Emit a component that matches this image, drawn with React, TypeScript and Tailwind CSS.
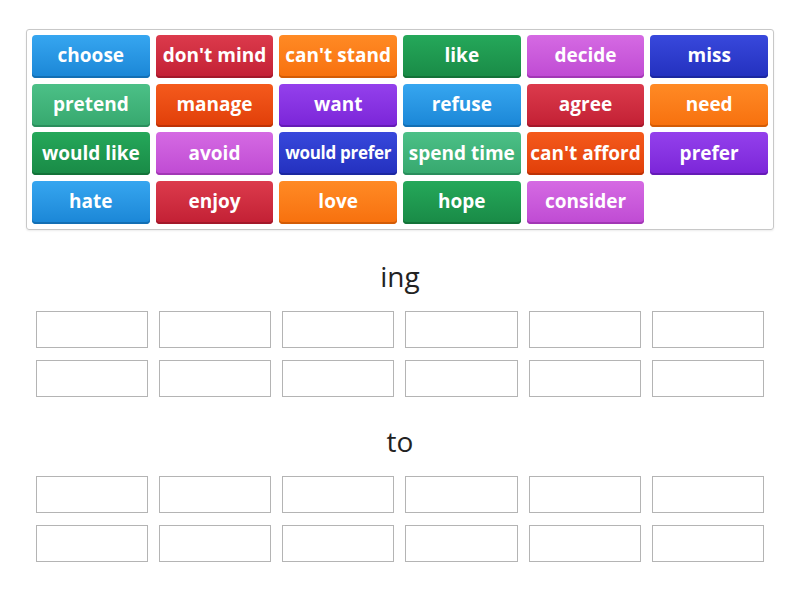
const tiles: { label: string; color: number; small?: boolean }[] = [
  { label: 'choose', color: 0 },
  { label: "don't mind", color: 1 },
  { label: "can't stand", color: 2 },
  { label: 'like', color: 3 },
  { label: 'decide', color: 4 },
  { label: 'miss', color: 5 },
  { label: 'pretend', color: 6 },
  { label: 'manage', color: 7 },
  { label: 'want', color: 8 },
  { label: 'refuse', color: 0 },
  { label: 'agree', color: 1 },
  { label: 'need', color: 2 },
  { label: 'would like', color: 3 },
  { label: 'avoid', color: 4 },
  { label: 'would prefer', color: 5, small: true },
  { label: 'spend time', color: 6 },
  { label: "can't afford", color: 7 },
  { label: 'prefer', color: 8 },
  { label: 'hate', color: 0 },
  { label: 'enjoy', color: 1 },
  { label: 'love', color: 2 },
  { label: 'hope', color: 3 },
  { label: 'consider', color: 4 },
]

// tile gradients, light top to darker bottom
const palette = [
  'from-[#36a6f0] to-[#1a86d6] shadow-[inset_0_-2px_0_#136fb4]',
  'from-[#dc3a4c] to-[#c21f34] shadow-[inset_0_-2px_0_#a3182a]',
  'from-[#ff8a24] to-[#f7700c] shadow-[inset_0_-2px_0_#d35c06]',
  'from-[#25a85a] to-[#198a46] shadow-[inset_0_-2px_0_#137238]',
  'from-[#d56ae3] to-[#bf4ad3] shadow-[inset_0_-2px_0_#a237b5]',
  'from-[#3848dc] to-[#2330be] shadow-[inset_0_-2px_0_#1b27a0]',
  'from-[#4cc087] to-[#36a86e] shadow-[inset_0_-2px_0_#2a8e5c]',
  'from-[#f55a1c] to-[#e03e08] shadow-[inset_0_-2px_0_#bd3206]',
  'from-[#9440ec] to-[#7b24d8] shadow-[inset_0_-2px_0_#651bb6]',
]

function Tile({ label, color, small }: { label: string; color: number; small?: boolean }) {
  return (
    <div
      className={`flex h-[43px] items-center justify-center rounded-[4px] bg-linear-to-b pb-[2px] ${palette[color]} font-bold whitespace-nowrap text-white ${
        small ? 'text-[17px] tracking-[-0.3px]' : 'text-[19px]'
      }`}
    >
      {label}
    </div>
  )
}

function DropGroup({ title }: { title: string }) {
  return (
    <div>
      <div className="h-[40px] text-center text-[28px] leading-[40px] text-[#222]">{title}</div>
      <div className="mx-[36px] mt-[15px] grid grid-cols-6 gap-x-[11px] gap-y-[12px]">
        {Array.from({ length: 12 }).map((_, i) => (
          <div key={i} className="h-[37px] border border-[#b4b4b4] bg-white" />
        ))}
      </div>
    </div>
  )
}

export default function App() {
  return (
    <div className="h-[600px] w-[800px] overflow-hidden bg-white font-['Open_Sans',sans-serif]">
      <div className="pt-[29px]">
        <div className="mx-[26px] rounded-[3px] border border-[#c8c8c8] p-[5px] shadow-[0_1px_2px_rgba(0,0,0,0.08)]">
          <div className="grid grid-cols-6 gap-x-[6px] gap-y-[5.7px]">
            {tiles.map((t) => (
              <Tile key={t.label} {...t} />
            ))}
          </div>
        </div>
      </div>
      <div className="mt-[26px]">
        <DropGroup title="ing" />
      </div>
      <div className="mt-[24px]">
        <DropGroup title="to" />
      </div>
    </div>
  )
}
